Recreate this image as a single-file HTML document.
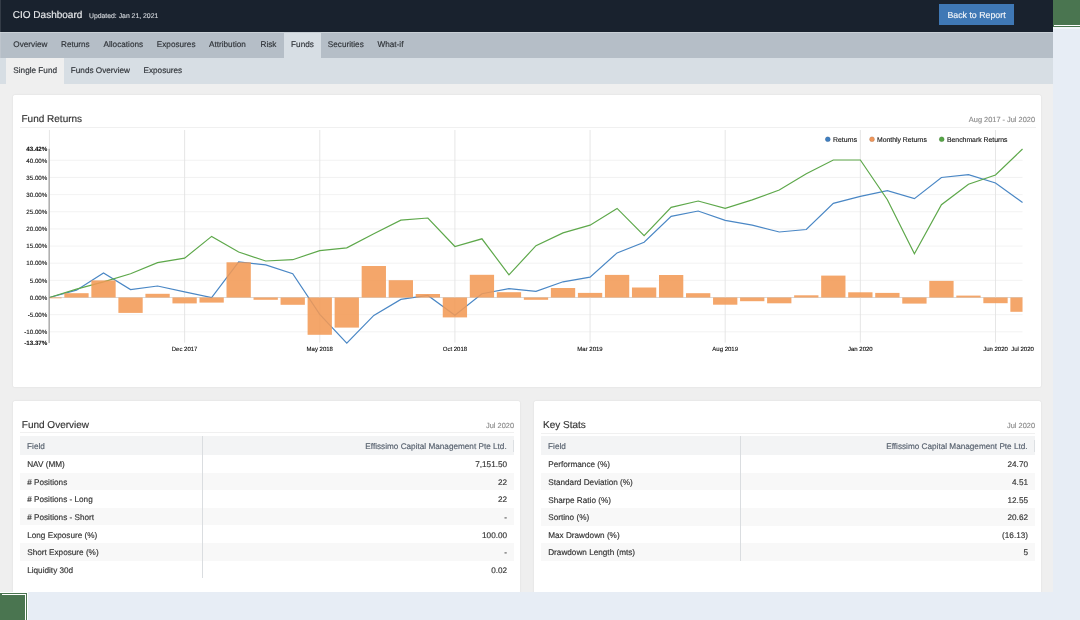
<!DOCTYPE html>
<html><head><meta charset="utf-8">
<style>
html,body{margin:0;padding:0;}
body{width:1080px;height:620px;overflow:hidden;position:relative;background:#e7edf5;font-family:"Liberation Sans",sans-serif;color:#333;text-rendering:geometricPrecision;}
.abs{position:absolute;}
#app{position:absolute;left:0;top:0;width:1053px;height:592px;background:#efefef;overflow:hidden;will-change:transform;}
#hdr{position:absolute;left:0;top:0;width:1053px;height:32.4px;background:#19222e;}
#nav{position:absolute;left:0;top:32.4px;width:1053px;height:25.2px;background:#b5bec7;border-top:0.6px solid #c9d0d6;box-sizing:border-box;}
#sub{position:absolute;left:0;top:57.6px;width:1053px;height:26.4px;background:#d7dee4;}
.t{position:absolute;white-space:nowrap;line-height:1;-webkit-text-stroke:0.15px currentColor;}
.tbl span{-webkit-text-stroke:0.15px currentColor;}
.card{position:absolute;background:#fff;border-radius:1.5px;box-shadow:0 0 1.6px rgba(0,0,0,0.13);}
.tbl{position:absolute;height:200px;}
.th{position:absolute;left:0;top:0;right:0;background:#f3f4f5;}
.th .f{position:absolute;left:7.6px;top:7px;font-size:8.2px;color:#57616e;line-height:1;}
.th .e{position:absolute;right:7.4px;top:7px;font-size:8.2px;color:#57616e;line-height:1;}
.th .rh{position:absolute;right:0.4px;top:4px;width:1px;height:12px;background:#dde0e3;}
.tr{position:absolute;left:0;right:0;}
.tr .f{position:absolute;left:7.7px;top:6.2px;font-size:8.2px;color:#333;line-height:1;}
.tr .v{position:absolute;right:7px;top:6.2px;font-size:8.2px;color:#333;line-height:1;}
.div{position:absolute;width:1px;background:#dadde0;}
</style></head><body>
<div id="app">
 <div id="hdr">
  <div class="t" style="left:12.8px;top:11.2px;font-size:10px;color:#e8eaec">CIO Dashboard</div>
  <div class="t" style="left:89px;top:13.5px;font-size:6.85px;color:#cfd3d8">Updated: Jan 21, 2021</div>
  <div class="abs" style="left:939px;top:4.2px;width:74.9px;height:21.3px;background:#3f78b5"></div>
  <div class="t" style="left:947.4px;top:11.0px;font-size:8.8px;color:#f2f5f9">Back to Report</div>
 </div>
 <div id="nav">
  <div class="abs" style="left:284px;top:0;width:37px;height:25.6px;background:#d7dee4"></div>
  <div class="t" style="left:13.3px;top:7.9px;font-size:8.2px;color:#2e3237">Overview</div>
  <div class="t" style="left:61px;top:7.9px;font-size:8.2px;color:#2e3237">Returns</div>
  <div class="t" style="left:103.5px;top:7.9px;font-size:8.2px;color:#2e3237">Allocations</div>
  <div class="t" style="left:156.8px;top:7.9px;font-size:8.2px;color:#2e3237">Exposures</div>
  <div class="t" style="left:209px;top:7.9px;font-size:8.2px;color:#2e3237">Attribution</div>
  <div class="t" style="left:260.5px;top:7.9px;font-size:8.2px;color:#2e3237">Risk</div>
  <div class="t" style="left:291.1px;top:7.9px;font-size:8.2px;color:#2e3237">Funds</div>
  <div class="t" style="left:327.8px;top:7.9px;font-size:8.2px;color:#2e3237">Securities</div>
  <div class="t" style="left:377.5px;top:7.9px;font-size:8.2px;color:#2e3237">What-if</div>
 </div>
 <div id="sub">
  <div class="abs" style="left:6.2px;top:0;width:57.6px;height:26.4px;background:#efefef"></div>
  <div class="t" style="left:13.3px;top:9.7px;font-size:8.2px;color:#2e3237">Single Fund</div>
  <div class="t" style="left:70.8px;top:9.7px;font-size:8.2px;color:#2e3237">Funds Overview</div>
  <div class="t" style="left:143.5px;top:9.7px;font-size:8.2px;color:#2e3237">Exposures</div>
 </div>
 <div class="abs" style="left:0;top:0;width:1px;height:57.6px;background:rgba(255,255,255,0.12)"></div>
 <div class="card" style="left:13.2px;top:95.3px;width:1028px;height:291.8px"></div>
 <div class="t" style="left:21.5px;top:115.1px;font-size:10px;color:#333">Fund Returns</div>
 <div class="t" style="right:18px;top:116.4px;font-size:7.4px;color:#8c8c8c">Aug 2017 - Jul 2020</div>
 <div class="abs" style="left:19.5px;top:127px;width:1016px;height:1px;background:#f0f0f0"></div>

 <div class="card" style="left:13.2px;top:400.8px;width:507.2px;height:200px"></div>
 <div class="t" style="left:21.8px;top:420.6px;font-size:10px;color:#333">Fund Overview</div>
 <div class="t" style="left:478px;top:422.4px;font-size:7.4px;color:#8c8c8c;width:36px;text-align:right">Jul 2020</div>
 <div class="abs" style="left:19.5px;top:432.4px;width:494.6px;height:1px;background:#f0f0f0"></div>
 <div class="tbl" style="left:19.5px;top:435.6px;width:494.6px">
<div class="th" style="height:19.5px"><span class="f">Field</span><span class="e">Effissimo Capital Management Pte Ltd.</span><i class="rh"></i></div>
<div class="tr" style="top:19.50px;height:17.57px;background:#fff"><span class="f">NAV (MM)</span><span class="v">7,151.50</span></div>
<div class="tr" style="top:37.07px;height:17.57px;background:#f8f8f8"><span class="f"># Positions</span><span class="v">22</span></div>
<div class="tr" style="top:54.64px;height:17.57px;background:#fff"><span class="f"># Positions - Long</span><span class="v">22</span></div>
<div class="tr" style="top:72.21px;height:17.57px;background:#f8f8f8"><span class="f"># Positions - Short</span><span class="v">-</span></div>
<div class="tr" style="top:89.78px;height:17.57px;background:#fff"><span class="f">Long Exposure (%)</span><span class="v">100.00</span></div>
<div class="tr" style="top:107.35px;height:17.57px;background:#f8f8f8"><span class="f">Short Exposure (%)</span><span class="v">-</span></div>
<div class="tr" style="top:124.92px;height:17.57px;background:#fff"><span class="f">Liquidity 30d</span><span class="v">0.02</span></div>
<div class="div" style="left:182.90px;top:0;height:142.49px"></div>
</div>

 <div class="card" style="left:534.4px;top:400.8px;width:506.8px;height:200px"></div>
 <div class="t" style="left:543px;top:420.6px;font-size:10px;color:#333">Key Stats</div>
 <div class="t" style="left:999px;top:422.4px;font-size:7.4px;color:#8c8c8c;width:36px;text-align:right">Jul 2020</div>
 <div class="abs" style="left:540.5px;top:432.6px;width:494.5px;height:1px;background:#f0f0f0"></div>
 <div class="tbl" style="left:540.5px;top:435.8px;width:494.5px">
<div class="th" style="height:19.5px"><span class="f">Field</span><span class="e">Effissimo Capital Management Pte Ltd.</span><i class="rh"></i></div>
<div class="tr" style="top:19.50px;height:17.57px;background:#fff"><span class="f">Performance (%)</span><span class="v">24.70</span></div>
<div class="tr" style="top:37.07px;height:17.57px;background:#f8f8f8"><span class="f">Standard Deviation (%)</span><span class="v">4.51</span></div>
<div class="tr" style="top:54.64px;height:17.57px;background:#fff"><span class="f">Sharpe Ratio (%)</span><span class="v">12.55</span></div>
<div class="tr" style="top:72.21px;height:17.57px;background:#f8f8f8"><span class="f">Sortino (%)</span><span class="v">20.62</span></div>
<div class="tr" style="top:89.78px;height:17.57px;background:#fff"><span class="f">Max Drawdown (%)</span><span class="v">(16.13)</span></div>
<div class="tr" style="top:107.35px;height:17.57px;background:#f8f8f8"><span class="f">Drawdown Length (mts)</span><span class="v">5</span></div>
<div class="div" style="left:199.70px;top:0;height:124.92px"></div>
</div>
</div>
<svg width="1080" height="620" viewBox="0 0 1080 620" style="position:absolute;left:0;top:0">
<defs><clipPath id="pc"><rect x="49.45" y="0" width="973.08" height="620"/></clipPath></defs>
<line x1="49.45" x2="1022.5300000000001" y1="331.80" y2="331.80" stroke="#efefef" stroke-width="0.8"/>
<line x1="49.45" x2="1022.5300000000001" y1="314.65" y2="314.65" stroke="#efefef" stroke-width="0.8"/>
<line x1="49.45" x2="1022.5300000000001" y1="297.50" y2="297.50" stroke="#cfcfcf" stroke-width="0.8"/>
<line x1="49.45" x2="1022.5300000000001" y1="280.35" y2="280.35" stroke="#efefef" stroke-width="0.8"/>
<line x1="49.45" x2="1022.5300000000001" y1="263.20" y2="263.20" stroke="#efefef" stroke-width="0.8"/>
<line x1="49.45" x2="1022.5300000000001" y1="246.05" y2="246.05" stroke="#efefef" stroke-width="0.8"/>
<line x1="49.45" x2="1022.5300000000001" y1="228.90" y2="228.90" stroke="#efefef" stroke-width="0.8"/>
<line x1="49.45" x2="1022.5300000000001" y1="211.75" y2="211.75" stroke="#efefef" stroke-width="0.8"/>
<line x1="49.45" x2="1022.5300000000001" y1="194.60" y2="194.60" stroke="#efefef" stroke-width="0.8"/>
<line x1="49.45" x2="1022.5300000000001" y1="177.45" y2="177.45" stroke="#efefef" stroke-width="0.8"/>
<line x1="49.45" x2="1022.5300000000001" y1="160.30" y2="160.30" stroke="#efefef" stroke-width="0.8"/>
<line x1="49.45" x2="49.45" y1="130" y2="342.6" stroke="#e3e3e3" stroke-width="0.9"/>
<line x1="184.60" x2="184.60" y1="130" y2="342.6" stroke="#e3e3e3" stroke-width="0.9"/>
<line x1="319.75" x2="319.75" y1="130" y2="342.6" stroke="#e3e3e3" stroke-width="0.9"/>
<line x1="454.90" x2="454.90" y1="130" y2="342.6" stroke="#e3e3e3" stroke-width="0.9"/>
<line x1="590.05" x2="590.05" y1="130" y2="342.6" stroke="#e3e3e3" stroke-width="0.9"/>
<line x1="725.20" x2="725.20" y1="130" y2="342.6" stroke="#e3e3e3" stroke-width="0.9"/>
<line x1="860.35" x2="860.35" y1="130" y2="342.6" stroke="#e3e3e3" stroke-width="0.9"/>
<line x1="995.50" x2="995.50" y1="130" y2="342.6" stroke="#e3e3e3" stroke-width="0.9"/>
<polyline points="49.45,297.50 76.48,290.20 103.51,273.00 130.54,289.60 157.57,286.00 184.60,291.90 211.63,297.50 238.66,261.90 265.69,264.90 292.72,273.70 319.75,314.30 346.78,343.20 373.81,315.40 400.84,299.40 427.87,295.40 454.90,315.30 481.93,293.70 508.96,288.70 535.99,291.40 563.02,281.80 590.05,277.10 617.08,252.90 644.11,242.30 671.14,216.30 698.17,211.00 725.20,220.30 752.23,225.10 779.26,232.00 806.29,229.50 833.32,203.30 860.35,196.40 887.38,190.70 914.41,198.60 941.44,177.50 968.47,174.70 995.50,183.00 1022.53,202.50" fill="none" stroke="#4a87c5" stroke-width="1.2" stroke-linejoin="miter"/>
<polyline points="49.45,297.50 76.48,289.20 103.51,281.80 130.54,273.70 157.57,262.60 184.60,258.20 211.63,236.40 238.66,252.00 265.69,261.00 292.72,259.70 319.75,250.60 346.78,247.90 373.81,233.70 400.84,220.20 427.87,218.00 454.90,246.50 481.93,238.80 508.96,274.80 535.99,245.70 563.02,232.90 590.05,225.20 617.08,208.40 644.11,235.60 671.14,207.30 698.17,201.00 725.20,208.30 752.23,199.90 779.26,190.00 806.29,173.70 833.32,160.00 860.35,160.00 887.38,199.70 914.41,253.70 941.44,204.70 968.47,184.20 995.50,175.00 1022.53,149.00" fill="none" stroke="#5ea84b" stroke-width="1.2" stroke-linejoin="miter"/>
<g clip-path="url(#pc)" fill="#f29a55" fill-opacity="0.88">
<rect x="37.30" y="297.50" width="24.3" height="0.80"/>
<rect x="64.33" y="293.20" width="24.3" height="4.30"/>
<rect x="91.36" y="280.40" width="24.3" height="17.10"/>
<rect x="118.39" y="297.50" width="24.3" height="15.40"/>
<rect x="145.42" y="293.80" width="24.3" height="3.70"/>
<rect x="172.45" y="297.50" width="24.3" height="5.90"/>
<rect x="199.48" y="297.50" width="24.3" height="5.10"/>
<rect x="226.51" y="262.30" width="24.3" height="35.20"/>
<rect x="253.54" y="297.50" width="24.3" height="2.30"/>
<rect x="280.57" y="297.50" width="24.3" height="7.30"/>
<rect x="307.60" y="297.50" width="24.3" height="37.30"/>
<rect x="334.63" y="297.50" width="24.3" height="30.10"/>
<rect x="361.66" y="266.00" width="24.3" height="31.50"/>
<rect x="388.69" y="280.20" width="24.3" height="17.30"/>
<rect x="415.72" y="294.00" width="24.3" height="3.50"/>
<rect x="442.75" y="297.50" width="24.3" height="19.90"/>
<rect x="469.78" y="274.80" width="24.3" height="22.70"/>
<rect x="496.81" y="292.20" width="24.3" height="5.30"/>
<rect x="523.84" y="297.50" width="24.3" height="2.30"/>
<rect x="550.87" y="288.00" width="24.3" height="9.50"/>
<rect x="577.90" y="292.90" width="24.3" height="4.60"/>
<rect x="604.93" y="274.90" width="24.3" height="22.60"/>
<rect x="631.96" y="287.50" width="24.3" height="10.00"/>
<rect x="658.99" y="275.00" width="24.3" height="22.50"/>
<rect x="686.02" y="293.20" width="24.3" height="4.30"/>
<rect x="713.05" y="297.50" width="24.3" height="7.20"/>
<rect x="740.08" y="297.50" width="24.3" height="3.70"/>
<rect x="767.11" y="297.50" width="24.3" height="5.80"/>
<rect x="794.14" y="295.30" width="24.3" height="2.20"/>
<rect x="821.17" y="275.60" width="24.3" height="21.90"/>
<rect x="848.20" y="292.30" width="24.3" height="5.20"/>
<rect x="875.23" y="292.90" width="24.3" height="4.60"/>
<rect x="902.26" y="297.50" width="24.3" height="6.10"/>
<rect x="929.29" y="280.90" width="24.3" height="16.60"/>
<rect x="956.32" y="295.60" width="24.3" height="1.90"/>
<rect x="983.35" y="297.50" width="24.3" height="5.70"/>
<rect x="1010.38" y="297.50" width="24.3" height="14.30"/>
</g>
<line x1="49.1" x2="49.1" y1="148.8" y2="343.1" stroke="#8a8a8a" stroke-width="1"/>
<g font-family="Liberation Sans, sans-serif" font-size="6.2" fill="#111" stroke="#111" stroke-width="0.12" text-anchor="end">
<text x="47.3" y="334.00">-10.00%</text>
<text x="47.3" y="316.85">-5.00%</text>
<text x="47.3" y="299.70">0.00%</text>
<text x="47.3" y="282.55">5.00%</text>
<text x="47.3" y="265.40">10.00%</text>
<text x="47.3" y="248.25">15.00%</text>
<text x="47.3" y="231.10">20.00%</text>
<text x="47.3" y="213.95">25.00%</text>
<text x="47.3" y="196.80">30.00%</text>
<text x="47.3" y="179.65">35.00%</text>
<text x="47.3" y="162.50">40.00%</text>
<text x="47.3" y="151.00" font-weight="bold">43.42%</text>
<text x="47.3" y="345.30" font-weight="bold">-13.37%</text>
</g>
<g font-family="Liberation Sans, sans-serif" font-size="6" fill="#111" stroke="#111" stroke-width="0.12" text-anchor="middle">
<text x="184.60" y="350.9">Dec 2017</text>
<text x="319.75" y="350.9">May 2018</text>
<text x="454.90" y="350.9">Oct 2018</text>
<text x="590.05" y="350.9">Mar 2019</text>
<text x="725.20" y="350.9">Aug 2019</text>
<text x="860.35" y="350.9">Jan 2020</text>
<text x="995.50" y="350.9">Jun 2020</text>
<text x="1022.53" y="350.9">Jul 2020</text>
</g>
<g font-family="Liberation Sans, sans-serif" font-size="6.85" fill="#111" stroke="#111" stroke-width="0.12">
<circle cx="827.8" cy="139.2" r="2.5" fill="#3f7fc1"/>
<text x="833.1" y="141.6">Returns</text>
<circle cx="872" cy="139.2" r="2.5" fill="#f0965a"/>
<text x="877" y="141.6">Monthly Returns</text>
<circle cx="941.7" cy="139.2" r="2.5" fill="#55a545"/>
<text x="947" y="141.6">Benchmark Returns</text>
</g>
</svg>
<div class="abs" style="left:1053.2px;top:0;width:26.8px;height:27px;background:#4a7550"></div>
<div class="abs" style="left:1053.6px;top:25px;width:26.4px;height:1px;background:#fff"></div>
<div class="abs" style="left:1053.2px;top:27px;width:26.8px;height:1.5px;background:#f3f6fa"></div>
<div class="abs" style="left:0;top:591.6px;width:28px;height:1.3px;background:#fff"></div>
<div class="abs" style="left:0;top:592.9px;width:27.1px;height:27.1px;background:#4a7550"></div>
<div class="abs" style="left:1.9px;top:594.2px;width:23.9px;height:1px;background:#fff"></div>
<div class="abs" style="left:24.8px;top:594.2px;width:1px;height:26px;background:#fff"></div>
<div class="abs" style="left:27.1px;top:591.6px;width:1.2px;height:28.4px;background:#fff"></div>
</body></html>
